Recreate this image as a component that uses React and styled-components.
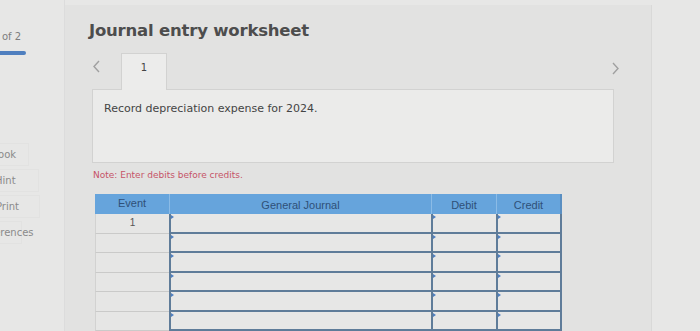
import React from 'react';
import styled, { createGlobalStyle } from 'styled-components';

const GlobalStyle = createGlobalStyle`
  html, body {
    margin: 0;
    padding: 0;
    background: #e7e7e6;
    overflow: hidden;
  }
  * {
    box-sizing: border-box;
  }
`;

const Page = styled.div`
  display: flex;
  width: 700px;
  height: 331px;
  font-family: "DejaVu Sans", Verdana, sans-serif;
`;

const Sidebar = styled.aside`
  width: 65px;
  flex-shrink: 0;
  overflow: hidden;
  display: flex;
  flex-direction: column;
  padding-top: 30px;
  border-right: 1px solid #dcdcdc;
`;

const PageCount = styled.div`
  font-size: 10px;
  color: #7d7d7d;
  line-height: 14px;
  padding-left: 2px;
`;

const Progress = styled.div`
  width: 26px;
  height: 4px;
  margin-top: 7px;
  background: #4f7fbf;
  border-radius: 0 2px 2px 0;
`;

const SideItems = styled.div`
  display: flex;
  flex-direction: column;
  gap: 3px;
  margin-top: 88px;
`;

const SideItem = styled.div`
  height: 23px;
  width: 44px;
  display: flex;
  align-items: center;
  font-size: 10px;
  color: #8a8a8a;
  white-space: nowrap;
  margin-left: ${(p) => p.$shift}px;
  border: 1px solid #e2e2e1;
  border-left: none;
`;

const Panel = styled.main`
  width: 587px;
  flex-shrink: 0;
  margin-top: 5px;
  background: #e2e2e1;
  padding: 14px 0 0 24px;
  display: flex;
  flex-direction: column;
  border-right: 1px solid #d9d9d8;
`;

const Title = styled.h1`
  margin: 0;
  font-size: 16.5px;
  line-height: 23px;
  font-weight: bold;
  color: #4d4d4d;
  letter-spacing: -0.2px;
`;

const TabRow = styled.div`
  margin: 11px 0 0 3px;
  width: 540px;
  height: 36px;
  display: flex;
  align-items: flex-end;
`;

const Arrow = styled.div`
  width: ${(p) => p.$w}px;
  height: 36px;
  display: flex;
  align-items: center;
  justify-content: ${(p) => p.$justify};
  padding-bottom: ${(p) => p.$drop}px;
`;

const Tab = styled.div`
  width: 46px;
  height: 37px;
  margin-bottom: -1px;
  background: #ececeb;
  border: 1px solid #d2d2d1;
  border-bottom: none;
  display: flex;
  align-items: center;
  justify-content: center;
  font-size: 10px;
  color: #444;
  padding-bottom: 9px;
  position: relative;
  z-index: 1;
`;

const Spacer = styled.div`
  flex: 1;
`;

const Prompt = styled.div`
  margin-left: 3px;
  width: 522px;
  height: 77px;
  background: #ebebea;
  border: 1px solid #d2d2d1;
  padding: 12px 11px;
  font-size: 11px;
  line-height: 14px;
  color: #444;
`;

const Note = styled.div`
  margin: 6px 0 0 4px;
  font-size: 9px;
  line-height: 12px;
  color: #c65468;
`;

const Table = styled.div`
  margin: 13px 0 0 6px;
  width: 467px;
  display: grid;
  grid-template-columns: 74px 262px 65px 66px;
  grid-template-rows: 20px;
  grid-auto-rows: 19.5px;
  font-family: "Liberation Sans", Arial, sans-serif;
`;

const HeadCell = styled.div`
  background: #66a4dc;
  color: #2f5078;
  font-size: 11px;
  display: flex;
  align-items: center;
  justify-content: center;
  padding-top: ${(p) => (p.$raise ? 0 : 2)}px;
  padding-bottom: ${(p) => (p.$raise ? 3 : 0)}px;
  border-left: ${(p) => (p.$first ? 'none' : '1px solid #8bbbe6')};
  border-right: ${(p) => (p.$last ? '2px solid #5a8fc2' : 'none')};
`;

const EventCell = styled.div`
  background: #e6e6e5;
  border-bottom: 1px solid #cacac9;
  border-left: 1px solid #d2d2d1;
  display: flex;
  justify-content: center;
  padding-top: 3px;
  font-size: 10px;
  color: #555;
`;

const InputCell = styled.div`
  position: relative;
  background: #e7e7e6;
  border-left: 2px solid #5f7c99;
  border-bottom: 2px solid #5f7c99;
  border-right: ${(p) => (p.$last ? '2px solid #5f7c99' : 'none')};
  &::before {
    content: '';
    position: absolute;
    left: 0;
    top: 1px;
    border-top: 2px solid transparent;
    border-bottom: 2px solid transparent;
    border-left: 3px solid #4f7fbf;
  }
`;

const rows = ['1', '', '', '', '', ''];

export default function App() {
  return (
    <>
      <GlobalStyle />
      <Page>
        <Sidebar>
          <PageCount>of 2</PageCount>
          <Progress />
          <SideItems>
            <SideItem $shift={-15}>eBook</SideItem>
            <SideItem $shift={-5}>Hint</SideItem>
            <SideItem $shift={-4}>Print</SideItem>
            <SideItem $shift={-22}>References</SideItem>
          </SideItems>
        </Sidebar>
        <Panel>
          <Title>Journal entry worksheet</Title>
          <TabRow>
            <Arrow $w={29} $justify="flex-start" $drop={10}>
              <svg width="8" height="13" viewBox="0 0 8 13">
                <path d="M7 1 L2 6.5 L7 12" fill="none" stroke="#a0a0a0" strokeWidth="1.4" />
              </svg>
            </Arrow>
            <Tab>1</Tab>
            <Spacer />
            <Arrow $w={20} $justify="flex-start" $drop={6}>
              <svg width="8" height="13" viewBox="0 0 8 13">
                <path d="M1 1 L6 6.5 L1 12" fill="none" stroke="#a0a0a0" strokeWidth="1.4" />
              </svg>
            </Arrow>
          </TabRow>
          <Prompt>Record depreciation expense for 2024.</Prompt>
          <Note>Note: Enter debits before credits.</Note>
          <Table>
            <HeadCell $first $raise>Event</HeadCell>
            <HeadCell>General Journal</HeadCell>
            <HeadCell>Debit</HeadCell>
            <HeadCell $last>Credit</HeadCell>
            {rows.map((ev, i) => (
              <React.Fragment key={i}>
                <EventCell>{ev}</EventCell>
                <InputCell />
                <InputCell />
                <InputCell $last />
              </React.Fragment>
            ))}
          </Table>
        </Panel>
      </Page>
    </>
  );
}
